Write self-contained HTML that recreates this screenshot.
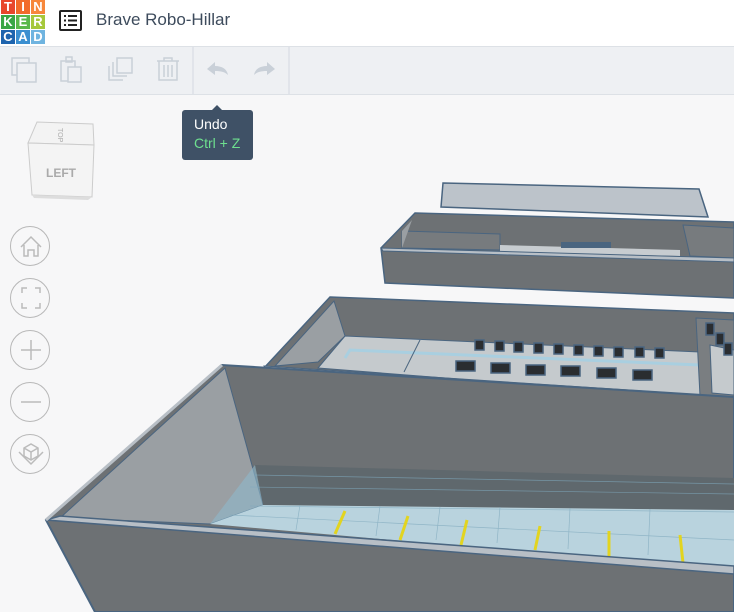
<!DOCTYPE html>
<html><head><style>
body{margin:0;width:734px;height:612px;overflow:hidden;background:#f7f7f8;font-family:"Liberation Sans",sans-serif;position:relative}
.hdr{position:absolute;left:0;top:0;width:734px;height:46px;background:#fff;border-bottom:1px solid #dde1e6}
.tb{position:absolute;left:0;top:47px;width:734px;height:47px;background:#eef0f3;border-bottom:1px solid #dde1e6}
.logo{position:absolute;left:1px;top:0;display:grid;grid-template-columns:repeat(3,14px);grid-template-rows:repeat(3,14px);gap:1px}
.logo span{color:#fff;font-weight:bold;font-size:13px;text-align:center;line-height:14px}
.title{position:absolute;left:96px;top:10px;font-size:17px;color:#3d4b5c}
.tip{position:absolute;left:182px;top:110px;width:71px;height:50px;background:#3f5166;border-radius:3px;font-size:14px}
.tip:before{content:"";position:absolute;left:30px;top:-5px;border:5px solid transparent;border-top:0;border-bottom-color:#3f5166}
.btn{position:absolute;left:10px;width:40px;height:40px;border:1px solid #b8b8b8;border-radius:50%;box-sizing:border-box}
</style></head><body>
<div class="hdr">
<div class="logo">
<span style="background:#e8472d">T</span><span style="background:#f26b2a">I</span><span style="background:#f7873b">N</span>
<span style="background:#3aa645">K</span><span style="background:#5ab84a">E</span><span style="background:#a6c83b">R</span>
<span style="background:#1e64ae">C</span><span style="background:#3b8fd0">A</span><span style="background:#6fb4e0">D</span>
</div>
<svg style="position:absolute;left:59px;top:10px" width="24" height="22"><rect x="1" y="1" width="21" height="19" fill="none" stroke="#222" stroke-width="2" rx="1"/><g fill="#222"><rect x="5" y="5" width="2" height="2"/><rect x="9" y="5" width="9" height="2"/><rect x="5" y="9.5" width="2" height="2"/><rect x="9" y="9.5" width="9" height="2"/><rect x="5" y="14" width="2" height="2"/><rect x="9" y="14" width="9" height="2"/></g></svg>
<div class="title">Brave Robo-Hillar</div>
</div>
<div class="tb">
<svg width="734" height="47" style="position:absolute;left:0;top:0" fill="none" stroke="#c9d0d8" stroke-width="1.5">
<rect x="12" y="11" width="17" height="17"/><rect x="17" y="16" width="19" height="19" fill="#eef0f3"/>
<rect x="61" y="14" width="14" height="20"/><rect x="66" y="10" width="6" height="5"/><rect x="68" y="20" width="13" height="15" fill="#eef0f3"/>
<rect x="117" y="11" width="15" height="15"/><path d="M113 15v14h14M109 19v14h14"/>
<path d="M157 14h22M164 14v-3h8v3M159 14v19h18v-19M164 18v12M168 18v12M172 18v12"/>
<line x1="193" y1="0" x2="193" y2="47" stroke="#dde1e6"/><line x1="289" y1="0" x2="289" y2="47" stroke="#dde1e6"/>
</svg>
<svg width="100" height="47" style="position:absolute;left:200px;top:0" fill="#c9d0d8"><path d="M7 22l8-7v4c7 0 12 3 13 9-3-3-7-4-13-4v4z"/><path d="M75 22l-8-7v4c-7 0-12 3-13 9 3-3 7-4 13-4v4z"/></svg>
</div>
<svg width="734" height="612" style="position:absolute;left:0;top:0">
<!-- lid -->
<polygon points="443,183 699,189 708,217 441,207" fill="#bcc3ca" stroke="#4a6580" stroke-width="1.5"/>
<!-- top box -->
<polygon points="381,248 415,213 734,222 734,298 385,283" fill="#6d7174" stroke="#4a6580" stroke-width="1.5"/>
<polygon points="402,231 500,234 500,250 402,248" fill="#777b7e" stroke="#4a6580"/>
<polygon points="402,231 412,220 402,248" fill="#9a9fa3"/>
<polygon points="500,245 680,250 680,256 500,252" fill="#c7ccd0"/>
<rect x="561" y="242" width="50" height="6" fill="#4a6580"/>
<polygon points="683,225 734,228 734,258 690,256" fill="#777b7e" stroke="#4a6580"/>
<polygon points="381,248 734,258 734,262 383,251" fill="#b8bfc6" stroke="#4a6580"/>
<!-- middle box -->
<polygon points="330,297 734,313 734,400 264,368" fill="#6d7174" stroke="#4a6580" stroke-width="1.5"/>
<polygon points="334,301 345,336 318,362 275,366" fill="#9a9fa3" stroke="#4a6580"/>
<polygon points="345,336 700,352 700,398 318,368" fill="#c5cacd" stroke="#4a6580"/>
<polyline points="345,358 350,350 700,365" fill="none" stroke="#a9cfe0" stroke-width="3"/>
<line x1="420" y1="340" x2="404" y2="372" stroke="#4a6580"/>
<polygon points="696,318 734,320 734,398 700,396" fill="#7a7e81" stroke="#4a6580"/>
<polygon points="710,345 734,350 734,395 712,393" fill="#c5cacd" stroke="#4a6580"/>
<g fill="#2a2d30" stroke="#4a6580" stroke-width="1.5">
<rect x="475" y="340" width="9" height="10"/><rect x="495" y="341" width="9" height="10"/><rect x="514" y="342" width="9" height="10"/><rect x="534" y="343" width="9" height="10"/><rect x="554" y="344" width="9" height="10"/><rect x="574" y="345" width="9" height="10"/><rect x="594" y="346" width="9" height="10"/><rect x="614" y="347" width="9" height="10"/><rect x="635" y="347" width="9" height="10"/><rect x="655" y="348" width="9" height="10"/>
<rect x="456" y="361" width="19" height="10"/><rect x="491" y="363" width="19" height="10"/><rect x="526" y="365" width="19" height="10"/><rect x="561" y="366" width="19" height="10"/><rect x="597" y="368" width="19" height="10"/><rect x="633" y="370" width="19" height="10"/>
<rect x="706" y="323" width="8" height="12"/><rect x="716" y="333" width="8" height="12"/><rect x="724" y="343" width="8" height="12"/>
</g>
<polygon points="264,366 734,397 734,402 266,370" fill="#b8bfc6" stroke="#4a6580"/>
<!-- front box -->
<polygon points="46,520 222,365 734,397 734,612 95,612" fill="#6d7174" stroke="#4a6580" stroke-width="2"/>
<polygon points="60,518 225,368 263,505 210,524" fill="#9a9fa3" stroke="#4a6580"/>
<polygon points="255,465 734,478 734,512 263,505" fill="#5f686d"/>
<polygon points="263,505 734,510 734,570 210,524" fill="#b9d3de"/>
<polygon points="210,524 255,465 263,505" fill="#8fb9cc" opacity=".6"/>
<g stroke="#7fa9bd" stroke-width=".7" opacity=".7">
<line x1="250" y1="506" x2="734" y2="512"/><line x1="230" y1="515" x2="734" y2="540"/><line x1="250" y1="487" x2="734" y2="494"/><line x1="255" y1="475" x2="734" y2="484"/>
<line x1="300" y1="505" x2="296" y2="530"/><line x1="380" y1="506" x2="376" y2="536"/><line x1="440" y1="507" x2="436" y2="540"/><line x1="500" y1="507" x2="497" y2="543"/><line x1="570" y1="508" x2="568" y2="549"/><line x1="650" y1="509" x2="648" y2="555"/>
</g>
<g stroke="#e2d420" stroke-width="3">
<line x1="345" y1="511" x2="335" y2="534"/><line x1="408" y1="516" x2="400" y2="540"/><line x1="467" y1="520" x2="461" y2="545"/><line x1="540" y1="526" x2="535" y2="550"/><line x1="609" y1="531" x2="609" y2="557"/><line x1="680" y1="535" x2="683" y2="563"/>
</g>
<polygon points="46,520 60,516 734,566 734,574" fill="#b8bfc6" stroke="#4a6580" stroke-width="1.5"/>
<polyline points="46,520 222,365" fill="none" stroke="#b8bfc6" stroke-width="3"/>
<!-- view cube -->
<polygon points="28,143 37,122 93,124 94,145" fill="#f3f3f3" stroke="#ccc"/>
<polygon points="28,143 94,145 92,197 32,195" fill="#f4f4f4" stroke="#ccc"/>
<polygon points="32,195 92,197 88,200 34,198" fill="#ddd"/>
<text x="46" y="177" font-size="12" font-weight="bold" fill="#aaa" font-family="Liberation Sans">LEFT</text>
<text x="58" y="136" font-size="7" fill="#aaa" transform="rotate(90 62 132)">TOP</text>
</svg>
<div class="tip"><div style="position:absolute;left:12px;top:6px;color:#fff">Undo</div><div style="position:absolute;left:12px;top:25px;color:#6ee08f">Ctrl + Z</div></div>
<div class="btn" style="top:226px"></div><div class="btn" style="top:278px"></div><div class="btn" style="top:330px"></div><div class="btn" style="top:382px"></div><div class="btn" style="top:434px"></div>
<svg width="60" height="480" style="position:absolute;left:0;top:0" fill="none" stroke="#bbb" stroke-width="1.5">
<path d="M21 247l10-10 10 10M24 245v11h4v-6h6v6h4v-11"/>
<path d="M22 293v-5h5M35 288h5v5M40 303v5h-5M27 308h-5v-5"/>
<path d="M21 350h20M31 340v20"/>
<path d="M21 402h20"/>
<path d="M24 448l7-4 7 4v8l-7 4-7-4zM24 448l7 4 7-4M31 452v8M19 452l12 12 12-12"/>
</svg>
</body></html>
